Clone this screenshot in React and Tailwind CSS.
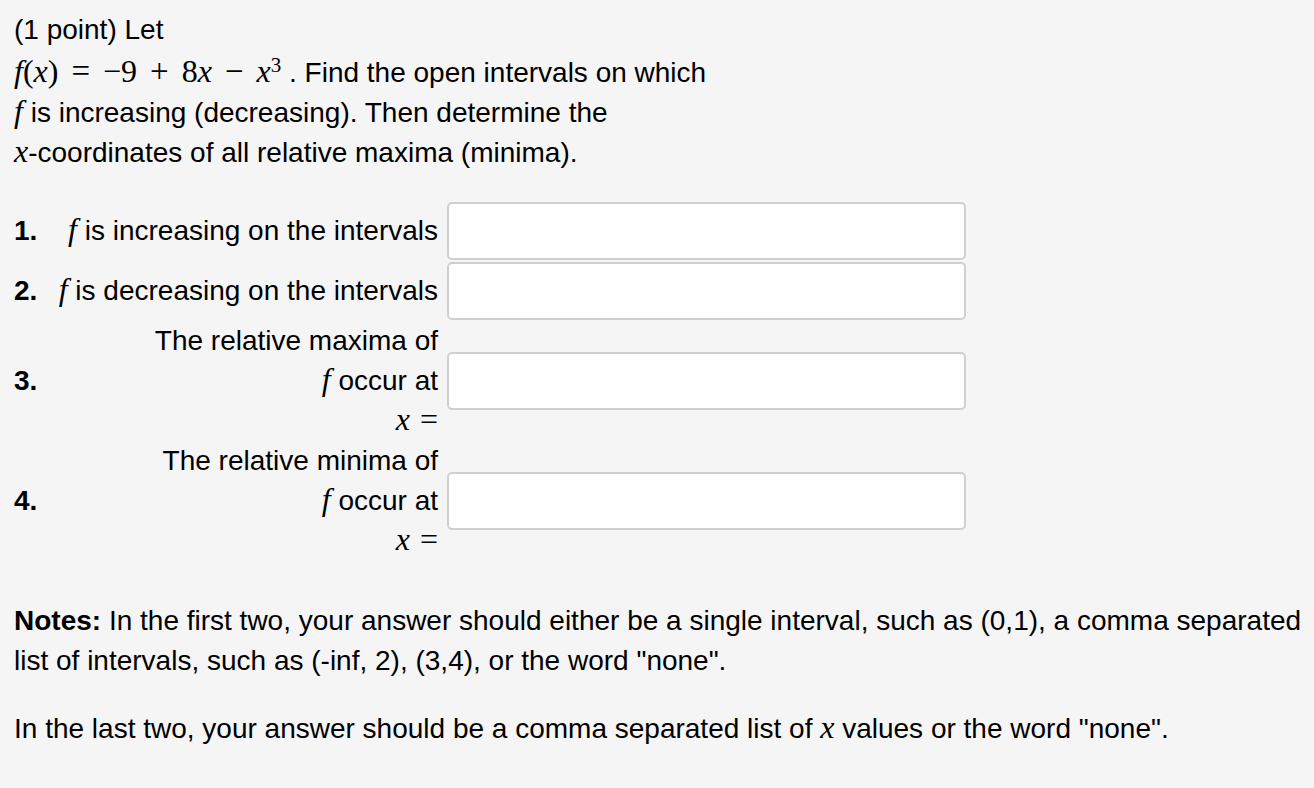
const sans = { fontFamily: '"Liberation Sans", Arial, sans-serif' };

function M({ children }) {
  return <span className="font-['Liberation_Serif',serif] italic text-[32px] leading-none">{children}</span>;
}

function R({ children }) {
  return <span className="font-['Liberation_Serif',serif] text-[32px] leading-none">{children}</span>;
}

function Op({ children }) {
  return <span className="font-['Liberation_Serif',serif] text-[33px] leading-none mx-[13px]">{children}</span>;
}

function Box() {
  return <div className="h-[58px] w-[519px] rounded-[5px] border-2 border-[#cfcfcf] bg-white" />;
}

function Row({ n, children, tall }) {
  return (
    <div className={`flex items-center ${tall ? 'h-[120px]' : 'h-[60px]'}`}>
      <div className="w-[30px] font-bold">{n}</div>
      <div className="w-[394px] text-right leading-[40px]">{children}</div>
      <div className="ml-[9px]"><Box /></div>
    </div>
  );
}

export default function App() {
  return (
    <div className="min-h-[788px] w-[1314px] bg-[#f5f5f5] pl-[14px] pr-[8px] pt-[10px] text-[28px] text-black" style={sans}>
      <div className="leading-[40px]">
        <div>(1 point) Let</div>
        <div className="pt-[3px]">
          <M>f</M><R>(</R><M>x</M><R>)</R>
          <Op>=</Op><R>−9</R>
          <Op>+</Op><R>8</R><M>x</M>
          <Op>−</Op><M>x</M><sup className="font-['Liberation_Serif',serif] text-[21px] leading-none">3</sup> . Find the open intervals on which
        </div>
        <div><M>f</M> is increasing (decreasing). Then determine the</div>
        <div><M>x</M>-coordinates of all relative maxima (minima).</div>
      </div>

      <div className="mt-[28px]">
        <Row n="1."><M>f</M> is increasing on the intervals</Row>
        <Row n="2."><M>f</M> is decreasing on the intervals</Row>
        <Row n="3." tall>
          <div>The relative maxima of</div>
          <div><M>f</M> occur at</div>
          <div><M>x</M><span className="ml-[10px]"><R>=</R></span></div>
        </Row>
        <Row n="4." tall>
          <div>The relative minima of</div>
          <div><M>f</M> occur at</div>
          <div><M>x</M><span className="ml-[10px]"><R>=</R></span></div>
        </Row>
      </div>

      <div className="mt-[40px] leading-[40px]">
        <p><span className="font-bold">Notes:</span> In the first two, your answer should either be a single interval, such as (0,1), a comma separated list of intervals, such as (-inf, 2), (3,4), or the word "none".</p>
        <p className="mt-[28px]">In the last two, your answer should be a comma separated list of <M>x</M> values or the word "none".</p>
      </div>
    </div>
  );
}
